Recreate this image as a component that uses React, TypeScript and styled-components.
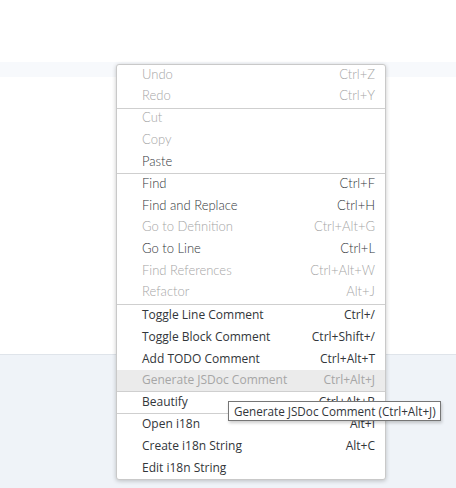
import React from 'react'
import styled, { createGlobalStyle } from 'styled-components'

const GlobalStyle = createGlobalStyle`
  html, body {
    margin: 0;
    padding: 0;
    background: #ffffff;
  }
  body {
    font-family: 'Open Sans', 'Liberation Sans', sans-serif;
  }
`

const Page = styled.div`
  position: relative;
  display: flex;
  flex-direction: column;
  width: 456px;
  height: 488px;
  overflow: hidden;
  background: #ffffff;
`

const TopSpace = styled.div`
  height: 62px;
  background: #ffffff;
`

const Band = styled.div`
  height: 15px;
  background: #f7f9fc;
`

const Editor = styled.div`
  flex: 1;
  background: #ffffff;
`

const Footer = styled.div`
  height: 133px;
  border-top: 1px solid #dfe4ea;
  background: #eff3f8;
`

const Menu = styled.ul`
  position: absolute;
  left: 116px;
  top: 64px;
  width: 268px;
  margin: 0;
  padding: 0;
  list-style: none;
  background: #ffffff;
  border: 1px solid #c9c9c9;
  border-radius: 3px;
  box-shadow: 0 1px 4px rgba(0, 0, 0, 0.22);
`

const Row = styled.li<{ $disabled?: boolean; $sep?: boolean; $hover?: boolean; $segoe?: boolean }>`
  display: flex;
  align-items: center;
  justify-content: space-between;
  box-sizing: border-box;
  height: 21.8px;
  padding: 0 10px ${(p) => (p.$segoe ? '2px' : '4px')} 25px;
  border-bottom: ${(p) => (p.$sep ? '1px solid #cfcfcf' : 'none')};
  background: ${(p) => (p.$hover ? '#ebebeb' : 'transparent')};
  color: ${(p) => (p.$disabled ? '#a6a6a6' : '#32363a')};
  font-family: ${(p) =>
    p.$segoe ? "'Open Sans', 'Liberation Sans', sans-serif" : "'Lato', 'Liberation Sans', sans-serif"};
  font-size: ${(p) => (p.$segoe ? '12px' : '13px')};
  font-weight: ${(p) => (p.$segoe ? 400 : 300)};
  white-space: nowrap;
`

const Shortcut = styled.span`
  font-size: inherit;
`

const Tooltip = styled.div`
  position: absolute;
  left: 228px;
  top: 401px;
  box-sizing: border-box;
  height: 20px;
  padding: 0 4px 1px 5px;
  display: flex;
  align-items: center;
  background: #ffffff;
  border: 1px solid #767676;
  box-shadow: 1px 2px 3px rgba(0, 0, 0, 0.2);
  color: #32363a;
  font-family: 'Open Sans', 'Liberation Sans', sans-serif;
  font-size: 11.7px;
  white-space: nowrap;
`

type Item = {
  label: string
  key?: string
  disabled?: boolean
  sep?: boolean
  hover?: boolean
  segoe?: boolean
}

const items: Item[] = [
  { label: 'Undo', key: 'Ctrl+Z', disabled: true },
  { label: 'Redo', key: 'Ctrl+Y', disabled: true, sep: true },
  { label: 'Cut', disabled: true },
  { label: 'Copy', disabled: true },
  { label: 'Paste', sep: true },
  { label: 'Find', key: 'Ctrl+F' },
  { label: 'Find and Replace', key: 'Ctrl+H' },
  { label: 'Go to Definition', key: 'Ctrl+Alt+G', disabled: true },
  { label: 'Go to Line', key: 'Ctrl+L' },
  { label: 'Find References', key: 'Ctrl+Alt+W', disabled: true },
  { label: 'Refactor', key: 'Alt+J', disabled: true, sep: true },
  { label: 'Toggle Line Comment', key: 'Ctrl+/', segoe: true },
  { label: 'Toggle Block Comment', key: 'Ctrl+Shift+/', segoe: true },
  { label: 'Add TODO Comment', key: 'Ctrl+Alt+T', segoe: true },
  { label: 'Generate JSDoc Comment', key: 'Ctrl+Alt+J', disabled: true, hover: true, sep: true, segoe: true },
  { label: 'Beautify', key: 'Ctrl+Alt+B', sep: true, segoe: true },
  { label: 'Open i18n', key: 'Alt+I', segoe: true },
  { label: 'Create i18n String', key: 'Alt+C', segoe: true },
  { label: 'Edit i18n String', segoe: true },
]

export default function App() {
  return (
    <>
      <GlobalStyle />
      <Page>
        <TopSpace />
        <Band />
        <Editor />
        <Footer />
        <Menu>
          {items.map((item) => (
            <Row
              key={item.label}
              $disabled={item.disabled}
              $sep={item.sep}
              $hover={item.hover}
              $segoe={item.segoe}
            >
              <span>{item.label}</span>
              {item.key && <Shortcut>{item.key}</Shortcut>}
            </Row>
          ))}
        </Menu>
        <Tooltip>Generate JSDoc Comment (Ctrl+Alt+J)</Tooltip>
      </Page>
    </>
  )
}
